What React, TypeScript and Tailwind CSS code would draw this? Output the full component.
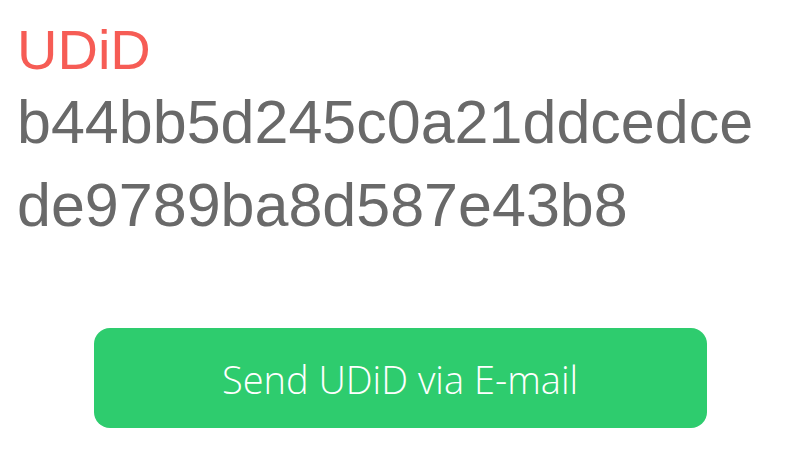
export default function App() {
  return (
    <div className="w-[800px] h-[450px] bg-white overflow-hidden font-['Liberation_Sans',Arial,sans-serif]">
      <div className="px-[17px] pt-[20px]">
        <h1 className="text-[56px] leading-[60px] text-[#f65c55] font-normal">UDiD</h1>
        <p className="mt-[1px] text-[61px] leading-[83px] text-[#696969] break-all">
          <span className="block">b44bb5d245c0a21ddcedce</span>
          <span className="block">de9789ba8d587e43b8</span>
        </p>
      </div>
      <div className="mt-[81px] flex justify-center">
        <button className="w-[613px] h-[100px] rounded-[16px] bg-[#2ecc6e] text-white text-[38px] font-light font-['Open_Sans',sans-serif] flex items-center justify-center pt-[3px]">
          Send UDiD via E-mail
        </button>
      </div>
    </div>
  )
}
